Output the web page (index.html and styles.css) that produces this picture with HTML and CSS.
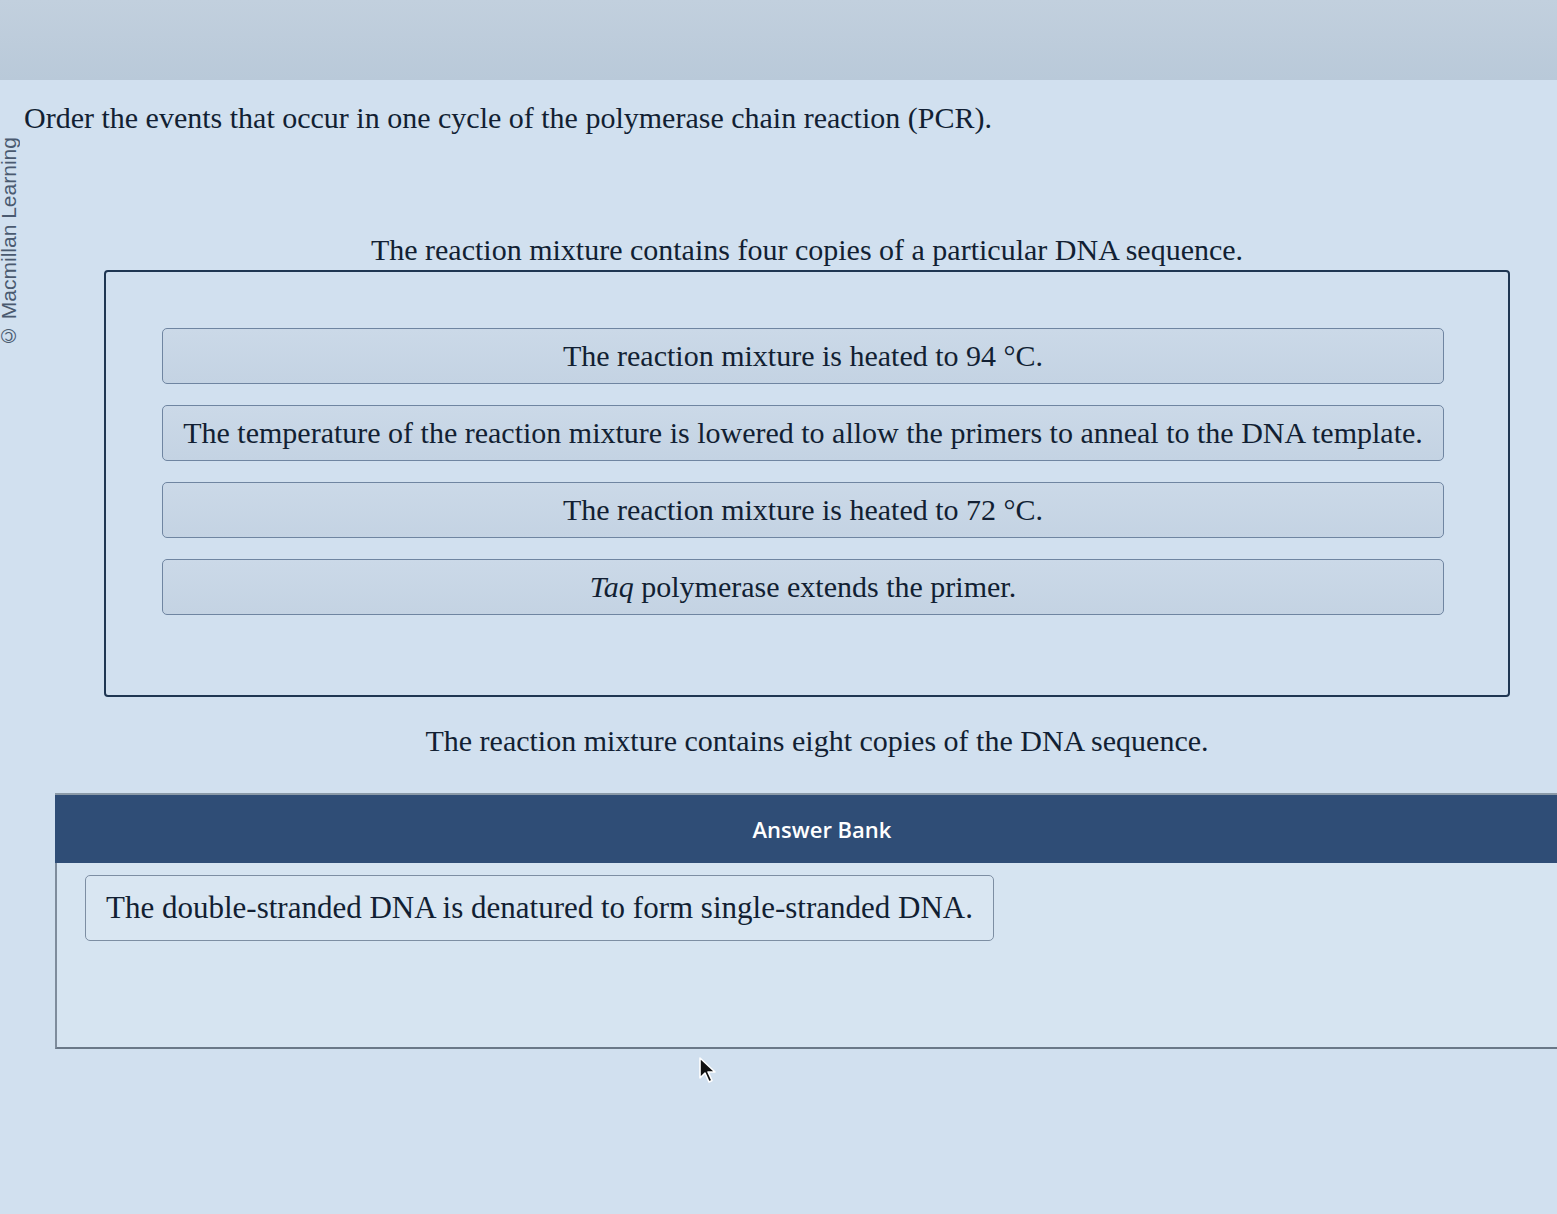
FILE: index.html
```html
<!DOCTYPE html>
<html lang="en">
<head>
<meta charset="utf-8">
<title>PCR ordering</title>
<link rel="stylesheet" href="styles.css">
</head>
<body>
<div class="topband"></div>
<main class="page">
  <div class="side-label">© Macmillan Learning</div>
  <div class="content">
    <h1 class="question">Order the events that occur in one cycle of the polymerase chain reaction (PCR).</h1>
    <section class="order">
      <p class="cap cap-top">The reaction mixture contains four copies of a particular DNA sequence.</p>
      <div class="dropbox">
        <div class="item">The reaction mixture is heated to 94 °C.</div>
        <div class="item">The temperature of the reaction mixture is lowered to allow the primers to anneal to the DNA template.</div>
        <div class="item">The reaction mixture is heated to 72 °C.</div>
        <div class="item"><i>Taq</i>&nbsp;polymerase extends the primer.</div>
      </div>
      <p class="cap cap-bottom">The reaction mixture contains eight copies of the DNA sequence.</p>
    </section>
  </div>
</main>
<section class="bank">
  <div class="bank-head">Answer Bank</div>
  <div class="bank-body">
    <div class="tile">The double-stranded DNA is denatured to form single-stranded DNA.</div>
  </div>
</section>
<svg class="cursor" width="22" height="30" viewBox="0 0 22 30" aria-hidden="true">
  <path d="M2 2 L2 22 L7 17 L11 26 L14 24.5 L10 16 L17 16 Z" fill="#111" stroke="#fff" stroke-width="1.6" stroke-linejoin="round"/>
</svg>
</body>
</html>
```
FILE: styles.css
```css
html, body {
  margin: 0;
  padding: 0;
}
body {
  background: #d1e0ef;
  font-family: "Liberation Serif", "Times New Roman", serif;
  color: #121f33;
  position: relative;
  min-height: 1214px;
  overflow: hidden;
}
.topband {
  height: 80px;
  background: linear-gradient(#c2d0de, #b9c9d9);
}
.page {
  display: flex;
  align-items: flex-start;
}
.side-label {
  width: 22px;
  flex: none;
  writing-mode: vertical-rl;
  transform: rotate(180deg);
  font-family: "Liberation Sans", Arial, sans-serif;
  font-size: 21px;
  color: #4a5a70;
  margin-top: 28px;
  height: 240px;
  text-align: left;
  white-space: nowrap;
  line-height: 22px;
  margin-left: -2px;
}
.content {
  flex: 1;
  padding-left: 4px;
}
.question {
  margin: 20px 0 0 0;
  font-weight: normal;
  font-size: 30px;
  line-height: 36px;
}
.order {
  margin: 96px 0 0 80px;
  width: 1406px;
  display: flex;
  flex-direction: column;
}
.cap {
  margin: 0;
  font-size: 30px;
  line-height: 36px;
  text-align: center;
}
.cap-top {
  margin-bottom: 2px;
}
.dropbox {
  border: 2px solid #1f3652;
  border-radius: 4px;
  padding: 56px 64px 80px 56px;
  display: flex;
  flex-direction: column;
  gap: 21px;
}
.item {
  height: 56px;
  box-sizing: border-box;
  border: 1.5px solid #6f85a1;
  border-radius: 5px;
  background: linear-gradient(#cbd9e8, #c4d3e3);
  font-size: 30px;
  display: flex;
  align-items: center;
  justify-content: center;
  white-space: nowrap;
}
.cap-bottom {
  margin-top: 26px;
  padding-left: 20px;
}
.bank {
  margin: 34px 0 0 55px;
  display: flex;
  flex-direction: column;
}
.bank-head {
  height: 68px;
  background: #2f4d76;
  border-top: 2px solid #8b9aa8;
  color: #ffffff;
  font-family: "Open Sans", "Liberation Sans", sans-serif;
  font-weight: 600;
  font-size: 22px;
  display: flex;
  align-items: center;
  justify-content: center;
  padding-left: 32px;
}
.bank-body {
  height: 186px;
  box-sizing: border-box;
  border-left: 2px solid #7e8c9c;
  border-bottom: 2px solid #6a7888;
  padding: 12px 0 0 28px;
  background: #d6e4f1;
  display: flex;
  align-items: flex-start;
}
.tile {
  height: 66px;
  box-sizing: border-box;
  padding: 0 20px;
  border: 1.5px solid #7d8ea3;
  border-radius: 5px;
  background: #d9e6f2;
  font-size: 31px;
  display: flex;
  align-items: center;
  white-space: nowrap;
}
.cursor {
  position: absolute;
  left: 698px;
  top: 1056px;
}
```
